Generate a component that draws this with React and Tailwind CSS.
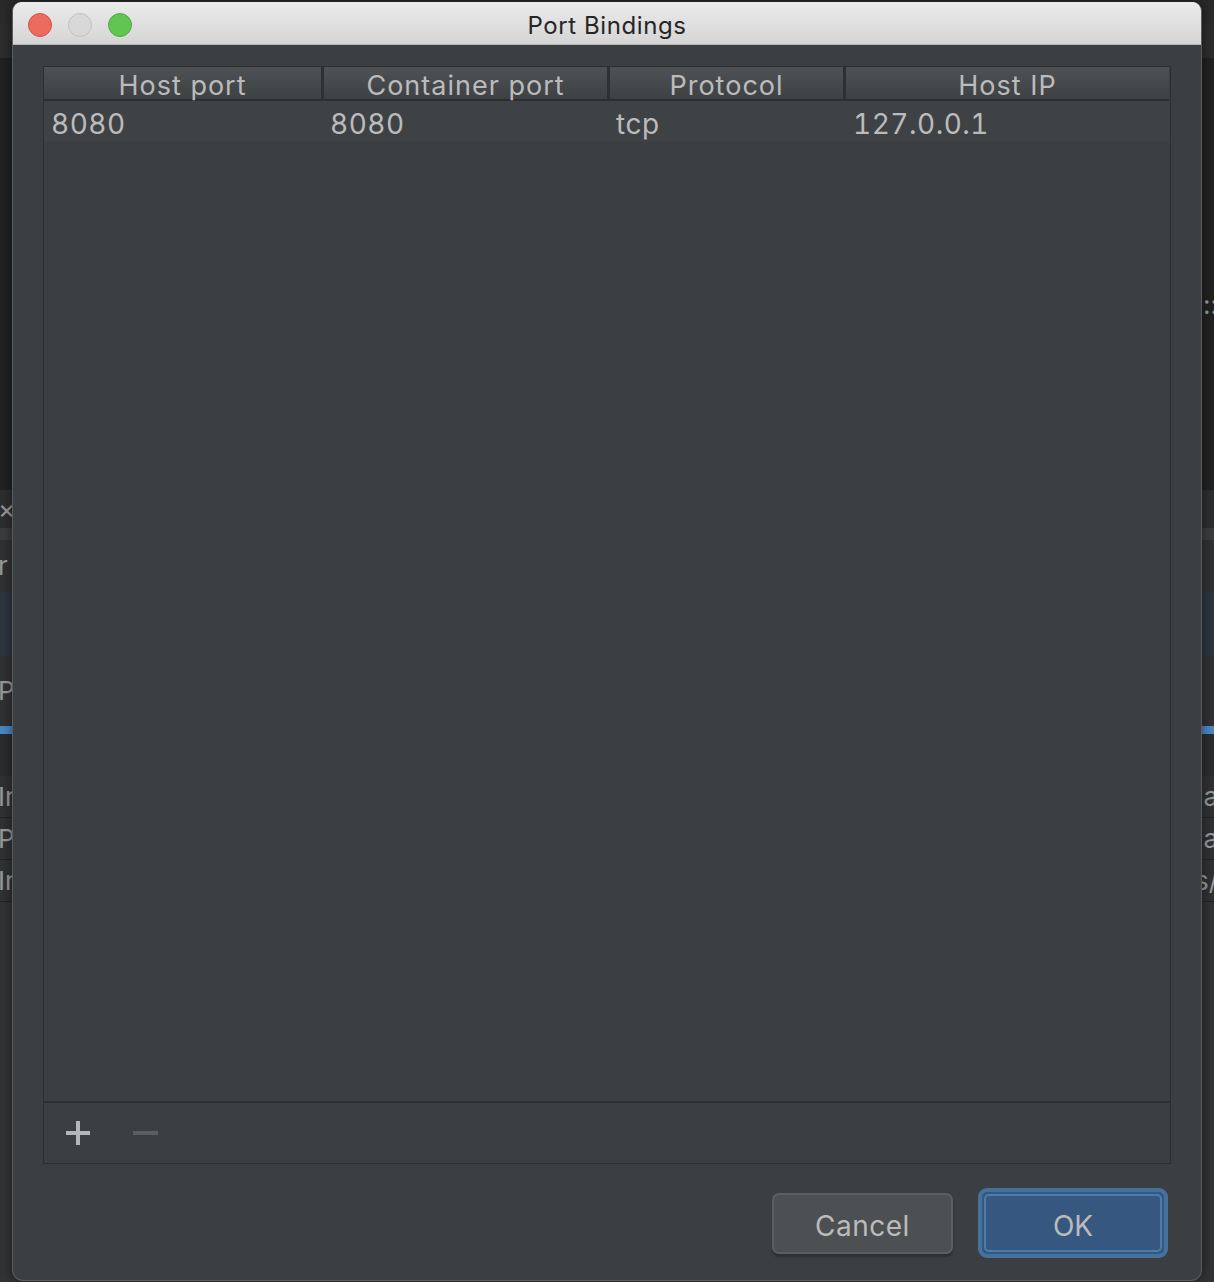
import React from 'react'

const COLUMNS = [
  { label: 'Host port', width: 'w-[280px]' },
  { label: 'Container port', width: 'w-[286px]' },
  { label: 'Protocol', width: 'w-[236px]' },
  { label: 'Host IP', width: 'flex-1' },
]

const ROW = ['8080', '8080', 'tcp', '127.0.0.1']
const CELL_PAD = ['pl-[7px]', 'pl-[6px]', 'pl-[6px]', 'pl-[7px]']

// strips of the IDE window that peek out on both sides of the dialog
const BANDS = [
  { h: 'h-[24px]', bg: 'bg-[#2a2a2a]' },
  { h: 'h-[34px]', bg: 'bg-[#2d2d2d]' },
  { h: 'h-[232px]', bg: 'bg-[#212121]' },
  { h: 'h-[30px]', bg: 'bg-[#212121]', right: '::' },
  { h: 'h-[170px]', bg: 'bg-[#212121]' },
  { h: 'h-[38px]', bg: 'bg-[#2d2e30]', left: '×' },
  { h: 'h-[12px]', bg: 'bg-[#3a3c3e]' },
  { h: 'h-[52px]', bg: 'bg-[#2f3133]', left: 'r' },
  { h: 'h-[64px]', bg: 'bg-[#2d3540]' },
  { h: 'h-[70px]', bg: 'bg-[#2f3133]', left: 'P' },
  { h: 'h-[8px]', bg: 'bg-[#4a88c7]' },
  { h: 'h-[42px]', bg: 'bg-[#2a2c2e]' },
  { h: 'h-[42px]', bg: 'bg-[#2f3133] border-b border-[#232425]', left: 'Ir', right: 'a' },
  { h: 'h-[42px]', bg: 'bg-[#2f3133] border-b border-[#232425]', left: 'P', right: 'a' },
  { h: 'h-[42px]', bg: 'bg-[#2f3133] border-b border-[#232425]', left: 'Ir', right: 's/' },
  { h: 'flex-1', bg: 'bg-[#313335]' },
]

function TrafficLights() {
  return (
    <div className="absolute left-[15px] top-[11px] flex gap-[16px]">
      <span className="w-[24px] h-[24px] rounded-full bg-[#ed6a5e] border border-[#d65145]" />
      <span className="w-[24px] h-[24px] rounded-full bg-[#d8d8d8] border border-[#c2c2c2]" />
      <span className="w-[24px] h-[24px] rounded-full bg-[#61c554] border border-[#4ead43]" />
    </div>
  )
}

export default function App() {
  return (
    <div
      className="relative w-[1214px] h-[1282px] overflow-hidden bg-[#212121]"
      style={{ fontFamily: 'Inter, "Noto Sans", sans-serif' }}
    >
      {/* IDE behind the dialog */}
      <div className="flex flex-col h-full">
        {BANDS.map((b, i) => (
          <div
            key={i}
            className={`${b.h} ${b.bg} flex items-center justify-between text-[26px] text-[#9a9a9a] leading-none`}
          >
            <span className="-ml-[2px]">{b.left || ''}</span>
            <span className="-mr-[4px]">{b.right || ''}</span>
          </div>
        ))}
      </div>

      {/* Dialog window */}
      <div className="absolute left-[12px] top-[2px] w-[1190px] h-[1279px] flex flex-col rounded-t-[9px] rounded-b-[11px] overflow-hidden bg-[#3c3f41] border-x border-b border-[#5a5d5f] shadow-[0_0_12px_rgba(0,0,0,0.5)]">
        {/* Title bar */}
        <div className="relative h-[43px] shrink-0 flex items-center justify-center pt-[5px] bg-gradient-to-b from-[#ebebeb] to-[#d5d5d5] border-b border-[#b4b4b4]">
          <TrafficLights />
          <span className="text-[24px] text-[#262626] tracking-[0.6px] leading-none">Port Bindings</span>
        </div>

        {/* Content */}
        <div className="flex-1 flex flex-col px-[30px] pt-[21px] pb-[22px]">
          {/* Table */}
          <div className="flex-1 flex flex-col border border-[#2c2e30]">
            <div className="h-[34px] shrink-0 flex bg-gradient-to-b from-[#4f5254] to-[#3e4143] border-b-[2px] border-[#2b2d2f] mr-[1px]">
              {COLUMNS.map((c, i) => (
                <div
                  key={c.label}
                  className={`${c.width} h-full flex items-center justify-center pt-[4px] text-[27px] tracking-[1px] text-[#bbbbbb] leading-none ${
                    i < COLUMNS.length - 1 ? 'border-r-[3px] border-[#2e3032]' : ''
                  }`}
                >
                  {c.label}
                </div>
              ))}
            </div>

            <div className="h-[41px] shrink-0 flex bg-[#3f4245]">
              {ROW.map((v, i) => (
                <div
                  key={i}
                  className={`${COLUMNS[i].width} ${CELL_PAD[i]} h-full flex items-center pt-[5px] text-[28px] tracking-[0.5px] tabular-nums text-[#bbbbbb] leading-none`}
                >
                  {v}
                </div>
              ))}
            </div>

            <div className="flex-1" />

            {/* toolbar */}
            <div className="h-[62px] shrink-0 flex items-center gap-[41px] pl-[21px] border-t-[2px] border-[#2c2e30]">
              <svg width="26" height="26" viewBox="0 0 26 26">
                <rect x="11" y="1" width="4" height="24" fill="#b4b6b8" />
                <rect x="1" y="11" width="24" height="4" fill="#b4b6b8" />
              </svg>
              <svg width="26" height="26" viewBox="0 0 26 26">
                <rect x="1" y="11" width="26" height="4" fill="#5b5e60" />
              </svg>
            </div>
          </div>

          {/* Buttons */}
          <div className="flex justify-end items-center gap-[25px] mt-[24px] pr-[3px]">
            <button className="w-[181px] h-[61px] pt-[6px] rounded-[7px] bg-[#4c5052] border-[2px] border-[#5c5f61] shadow-[0_3px_2px_rgba(0,0,0,0.25)] text-[28px] tracking-[0.5px] text-[#bbbbbb] leading-none">
              Cancel
            </button>
            <button className="w-[190px] h-[70px] rounded-[9px] bg-[#365880] border-[4px] border-[#46719d] p-[2px] text-[28px] text-[#bbbbbb] leading-none">
              <span className="w-full h-full flex items-center justify-center pt-[5px] rounded-[5px] border-[2px] border-[#4d7bab]">
                OK
              </span>
            </button>
          </div>
        </div>
      </div>
    </div>
  )
}
